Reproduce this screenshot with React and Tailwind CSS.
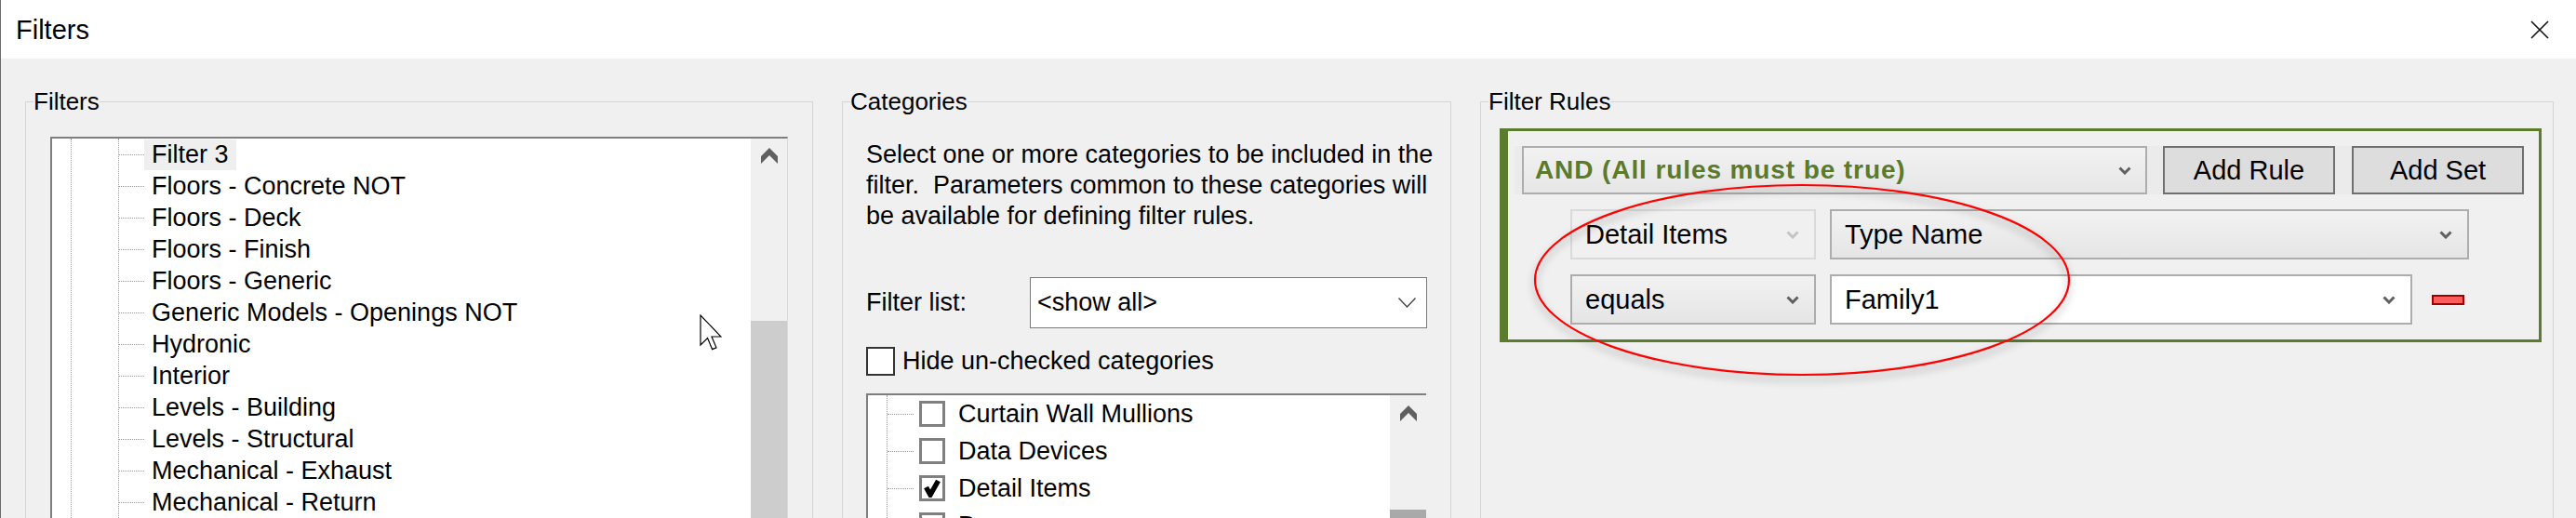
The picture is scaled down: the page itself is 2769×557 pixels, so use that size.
import React from 'react';

const FILTER_ROWS = [
  'Filter 3',
  'Floors - Concrete NOT',
  'Floors - Deck',
  'Floors - Finish',
  'Floors - Generic',
  'Generic Models - Openings NOT',
  'Hydronic',
  'Interior',
  'Levels - Building',
  'Levels - Structural',
  'Mechanical - Exhaust',
  'Mechanical - Return',
];

const CATEGORY_ROWS = [
  { name: 'Curtain Wall Mullions', checked: false },
  { name: 'Data Devices', checked: false },
  { name: 'Detail Items', checked: true },
  { name: 'Doors', checked: false },
];

function UpArrow() {
  return (
    <svg width="18" height="17" viewBox="0 0 18 17">
      <polygon points="0,9 9,0 18,9 18,17 9,8 0,17" fill="#606060" />
    </svg>
  );
}

function Chevron({ color = '#606060' }) {
  return (
    <svg width="14" height="9" viewBox="0 0 14 9" className="shrink-0">
      <polyline points="1.5,1.5 7,7 12.5,1.5" fill="none" stroke={color} strokeWidth="3" />
    </svg>
  );
}

// combo "WPF" du panneau Filter Rules
function RuleCombo({ width, children, white, disabled }) {
  return (
    <div
      className={`h-full flex items-center justify-between border-2 pl-[14px] pr-[16px] shrink-0 ${
        white
          ? 'bg-white border-[#adadad]'
          : disabled
          ? 'bg-[#f0f0f0] border-[#dadada]'
          : 'bg-gradient-to-b from-[#f2f2f2] to-[#e5e5e5] border-[#adadad]'
      }`}
      style={{ width }}
    >
      <span className="text-[29px] leading-[34px] whitespace-nowrap">{children}</span>
      <Chevron color={disabled ? '#c4c4c4' : '#606060'} />
    </div>
  );
}

function GroupBox({ label, width, children, bodyClass }) {
  return (
    <fieldset
      className="shrink-0 min-w-0 h-[520px] border border-[#d5d5d5] m-0 p-0"
      style={{ width }}
    >
      <legend className="ml-[8px] p-0 text-[26px] leading-[26px]">{label}</legend>
      <div className={bodyClass}>{children}</div>
    </fieldset>
  );
}

export default function App() {
  return (
    <div className="relative w-[2769px] h-[557px] overflow-hidden bg-[#f0f0f0] text-black border-l border-[#6b6b6b] font-['Liberation_Sans',Arial,sans-serif]">
      {/* Barre de titre */}
      <div className="h-[63px] bg-white flex items-center justify-between pl-[16px] pr-[29px]">
        <span className="text-[29px] leading-[34px]">Filters</span>
        <svg width="20" height="20" viewBox="0 0 20 20">
          <path d="M1 1 L19 19 M19 1 L1 19" stroke="#111" strokeWidth="1.6" />
        </svg>
      </div>

      <div className="flex gap-[31px] pl-[26px] pt-[33px]">
        {/* Filters */}
        <GroupBox label="Filters" width={847} bodyClass="pt-[25px] px-[26px]">
          <div className="flex h-[430px] border-t-2 border-l-2 border-[#7f7f7f] border-r border-r-[#dadada] bg-white">
            <div className="flex-1 min-w-0 pl-[20px] text-[27px]">
              <div className="h-full border-l border-dotted border-[#9a9a9a] pl-[50px]">
                <div className="h-full border-l border-dotted border-[#9a9a9a]">
                  {FILTER_ROWS.map((name, i) => (
                    <div key={name} className="h-[34px] flex items-center">
                      <span className="w-[27px] border-t border-dotted border-[#9a9a9a]" />
                      <span
                        className={`h-[33px] flex items-center px-[8px] leading-[33px] whitespace-nowrap ${
                          i === 0 ? 'bg-[#efefef]' : ''
                        }`}
                      >
                        {name}
                      </span>
                    </div>
                  ))}
                </div>
              </div>
            </div>
            <div className="w-[39px] shrink-0 bg-[#f0f0f0] flex flex-col">
              <div className="h-[36px] flex items-center justify-center">
                <UpArrow />
              </div>
              <div className="h-[160px]" />
              <div className="flex-1 bg-[#cdcdcd]" />
            </div>
          </div>
        </GroupBox>

        {/* Categories */}
        <GroupBox label="Categories" width={655} bodyClass="pt-[28px] px-[25px]">
          <p className="text-[27px] leading-[33px] whitespace-pre">
            {'Select one or more categories to be included in the\nfilter.  Parameters common to these categories will\nbe available for defining filter rules.'}
          </p>

          <div className="mt-[49px] h-[55px] flex items-center">
            <span className="w-[176px] text-[27px] leading-[33px]">Filter list:</span>
            <div className="w-[427px] h-full bg-white border border-[#7a7a7a] flex items-center justify-between pl-[7px] pr-[11px]">
              <span className="text-[27px] leading-[33px]">&lt;show all&gt;</span>
              <svg width="19" height="11" viewBox="0 0 19 11">
                <polyline points="0.5,0.5 9.5,10 18.5,0.5" fill="none" stroke="#444" strokeWidth="1.4" />
              </svg>
            </div>
          </div>

          <div className="mt-[20px] flex items-center h-[31px]">
            <span className="w-[31px] h-[31px] border-2 border-[#333] bg-white" />
            <span className="ml-[8px] text-[27px] leading-[33px]">Hide un-checked categories</span>
          </div>

          <div className="mt-[19px] w-[602px] h-[300px] flex border-t-2 border-l-2 border-[#7f7f7f] bg-white">
            <div className="flex-1 min-w-0 pl-[20px] text-[27px]">
              <div className="h-full border-l border-dotted border-[#9a9a9a]">
                {CATEGORY_ROWS.map((row) => (
                  <div key={row.name} className="h-[40px] flex items-center">
                    <span className="w-[28px] border-t border-dotted border-[#9a9a9a]" />
                    <span className="ml-[6px] w-[28px] h-[28px] border-[3px] border-[#808080] bg-white flex items-center justify-center">
                      {row.checked && (
                        <svg width="18" height="20" viewBox="0 0 18 20">
                          <path d="M2.5 9 L7 17 L15.5 2" fill="none" stroke="#000" strokeWidth="5.5" strokeLinejoin="miter" />
                        </svg>
                      )}
                    </span>
                    <span className="ml-[14px] leading-[33px] whitespace-nowrap">{row.name}</span>
                  </div>
                ))}
              </div>
            </div>
            <div className="w-[39px] shrink-0 bg-[#f0f0f0] flex flex-col">
              <div className="h-[38px] flex items-center justify-center">
                <UpArrow />
              </div>
              <div className="h-[85px]" />
              <div className="flex-1 bg-[#a9a9a9]" />
            </div>
          </div>
        </GroupBox>

        {/* Filter Rules */}
        <GroupBox label="Filter Rules" width={1154} bodyClass="pt-[16px] pl-[20px] pr-[12px]">
          <div className="border-[#5b7b2e] border-l-[9px] border-t-[3px] border-r-[3px] border-b-[3px] pl-[15px] pr-[16px] pt-[16px] pb-[16px]">
            <div className="h-[52px] flex gap-[17px] bg-[#ebebeb] -ml-[8px] pl-[8px]">
              <div className="w-[672px] h-full flex items-center justify-between border-2 border-[#adadad] bg-gradient-to-b from-[#f2f2f2] to-[#e6e6e6] pl-[12px] pr-[15px]">
                <span className="text-[28px] leading-[34px] font-bold tracking-[0.9px] text-[#5b7a2a] whitespace-nowrap">
                  AND (All rules must be true)
                </span>
                <Chevron />
              </div>
              <button className="w-[185px] h-full border-2 border-[#707070] bg-[#dddddd] text-[29px] leading-[34px]">
                Add Rule
              </button>
              <button className="ml-[1px] w-[185px] h-full border-2 border-[#707070] bg-[#dddddd] text-[29px] leading-[34px]">
                Add Set
              </button>
            </div>

            <div className="mt-[16px] ml-[52px] h-[54px] flex gap-[15px]">
              <RuleCombo width={264} disabled>Detail Items</RuleCombo>
              <RuleCombo width={687}>Type Name</RuleCombo>
            </div>

            <div className="mt-[16px] ml-[52px] h-[54px] flex items-center gap-[15px]">
              <RuleCombo width={264}>equals</RuleCombo>
              <RuleCombo width={626} white>Family1</RuleCombo>
              <span className="ml-[6px] w-[35px] h-[11px] bg-[#ff5c5c] border-2 border-[#a00000]" />
            </div>
          </div>
        </GroupBox>
      </div>

      {/* Ellipse rouge d'annotation */}
      <svg
        className="absolute left-[1645px] top-[195px] overflow-visible drop-shadow-[0_5px_4px_rgba(0,0,0,0.35)]"
        width="582"
        height="212"
        viewBox="0 0 582 212"
      >
        <ellipse cx="291" cy="106" rx="287" ry="102" fill="none" stroke="#ff0000" strokeWidth="2.2" />
      </svg>

      {/* Curseur souris */}
      <svg className="absolute left-[751px] top-[338px]" width="24" height="39" viewBox="0 0 12 19.5">
        <path
          d="M0.5 0.5 L0.5 16.5 L4.3 12.8 L6.8 18.8 L9 17.9 L6.5 12 L11.5 12 Z"
          fill="#fff"
          stroke="#000"
          strokeWidth="0.6"
          strokeLinejoin="miter"
        />
      </svg>
    </div>
  );
}
